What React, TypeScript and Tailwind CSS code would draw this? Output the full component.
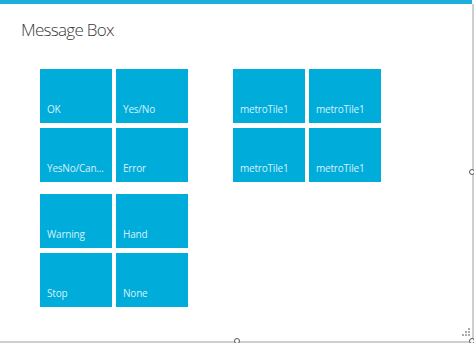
import React from "react"

const font = { fontFamily: '"Segoe UI", "Open Sans", "Noto Sans", sans-serif' }

function Tile({ label }: { label: string }) {
  return (
    <div className="w-[72px] h-[54px] bg-[#00acda] flex items-end px-[7px] pb-[9px] overflow-hidden">
      <span className="text-[10px] leading-none text-[#d6f1fa] whitespace-nowrap tracking-[-0.2px]">{label}</span>
    </div>
  )
}

function Group({ labels }: { labels: string[] }) {
  return (
    <div className="grid grid-cols-[72px_72px] gap-x-[4px] gap-y-[5px]">
      {labels.map((l, i) => (
        <Tile key={i} label={l} />
      ))}
    </div>
  )
}

export default function App() {
  return (
    <div className="relative w-[474px] h-[343px] bg-white overflow-hidden" style={font}>
      <div className="h-[4px] bg-[#1eaedb] mr-[2px]" />
      <div className="border-r-2 border-b-2 border-[#cfcfcf] h-[339px]">
        <h1 className="pl-[21px] pt-[14px] text-[17px] leading-[24px] font-light text-[#3a3a3a] tracking-[-0.7px]">
          Message Box
        </h1>
        <div className="flex pl-[40px] pt-[27px]">
          <div className="flex flex-col gap-[12px]">
            <Group labels={["OK", "Yes/No", "YesNo/Can...", "Error"]} />
            <Group labels={["Warning", "Hand", "Stop", "None"]} />
          </div>
          <div className="ml-[45px]">
            <Group labels={["metroTile1", "metroTile1", "metroTile1", "metroTile1"]} />
          </div>
        </div>
      </div>
      {/* designer handles */}
      <div className="absolute left-[469px] top-[169px] w-[6px] h-[6px] rounded-full border border-[#555] bg-white" />
      <div className="absolute left-[234px] top-[338px] w-[6px] h-[6px] rounded-full border border-[#555] bg-white" />
      <div className="absolute left-[469px] top-[338px] w-[6px] h-[6px] rounded-full border border-[#555] bg-white" />
      <div className="absolute left-[462px] top-[328px] grid grid-cols-3 gap-[1px] w-[8px]">
        <span />
        <span />
        <span className="w-[2px] h-[2px] bg-[#aaa]" />
        <span />
        <span className="w-[2px] h-[2px] bg-[#aaa]" />
        <span className="w-[2px] h-[2px] bg-[#aaa]" />
        <span className="w-[2px] h-[2px] bg-[#aaa]" />
        <span className="w-[2px] h-[2px] bg-[#aaa]" />
        <span className="w-[2px] h-[2px] bg-[#aaa]" />
      </div>
    </div>
  )
}
